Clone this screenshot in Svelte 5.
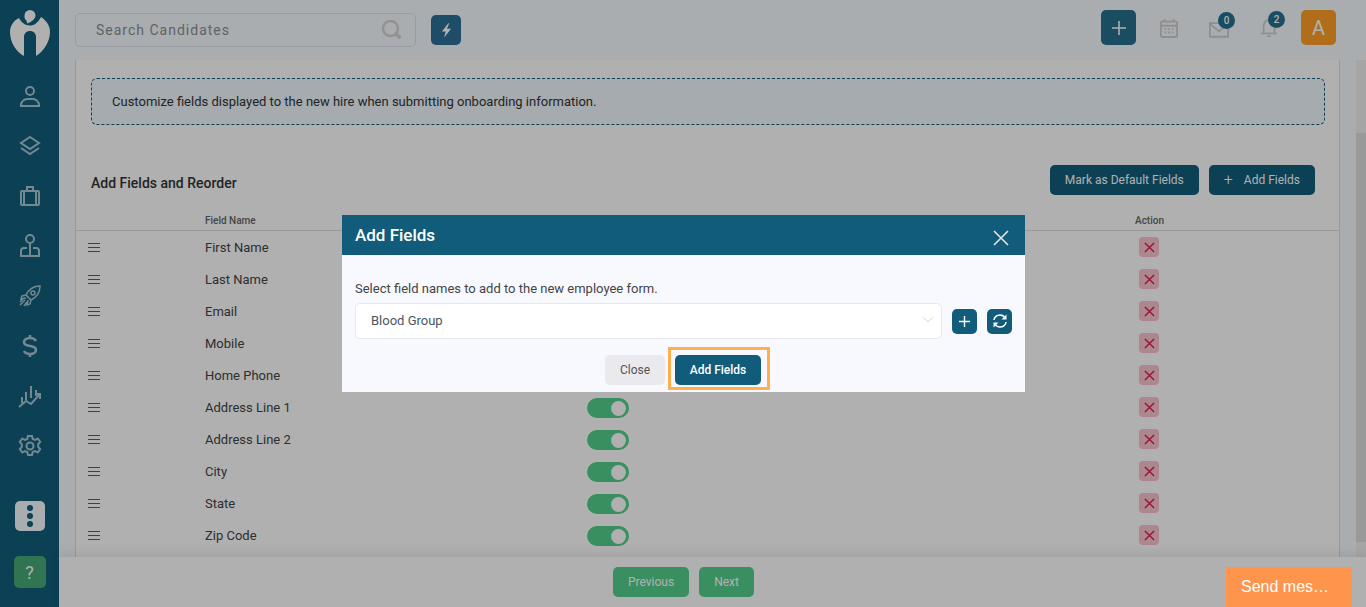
<script>
	const navIcons = [
		"M12 3a4 4 0 1 1 0 8 4 4 0 0 1 0-8zM3 22v-1c0-3 3-6 6-6h6c3 0 6 3 6 6v1z",
		"M12 3l9 6-9 6-9-6zM3 14l9 6 9-6",
		"M4 7h16a1 1 0 0 1 1 1v12a1 1 0 0 1-1 1H4a1 1 0 0 1-1-1V8a1 1 0 0 1 1-1zM9 7V3h6v4M6 7v14M18 7v14",
		"M12 1a4 4 0 1 1 0 8 4 4 0 0 1 0-8zM12 9v13M9 14H6c-2 0-3 1-3 3v5h18v-5c0-2-1-3-3-3h-3",
		"M22 2c-7 0-11 3-14 9l5 5c6-3 9-7 9-14zM15 7a2 2 0 1 1 0 4 2 2 0 0 1 0-4zM8 11l-4 1-1 3 5-1M13 16l-1 4-3 1 1-5M7 16l-5 5M9 18l-3 4M5 15l-3 3"
	];
	const rows = [
		"First Name",
		"Last Name",
		"Email",
		"Mobile",
		"Home Phone",
		"Address Line 1",
		"Address Line 2",
		"City",
		"State",
		"Zip Code"
	];
</script>

<div class="app">
	<aside class="sidebar">
		<svg class="logo" viewBox="0 0 40 46" width="40" height="46">
			<path fill="#fff" d="M20 0a5.500 5.500 0 0 1 5.500 5.500c0 3-2.500 5-5 6.500l-3 1.500c-.8-1-1-2-1-3-2-1-2-3-2-5A5.500 5.500 0 0 1 20 0z" />
			<path fill="#fff" d="M9 8c2 4 6 7.500 11 7.500 4 0 8-2.500 11-8.500 6 4 9 9 9 15 0 10-7 20-14 24V27c0-4-3-6-6-6s-6 2-6 6v19C6 42 0 32 0 22 0 16 3 11 9 8z" />
		</svg>
		<nav class="nav">
			{#each navIcons as d, i}
				<svg class:thin={i === 4} viewBox="0 0 24 24" width="24" height="24"><path {d} /></svg>
			{/each}
			<svg class="dollar" viewBox="0 0 24 24" width="24" height="24"><path d="M18 7c-1-2-3-3-6-3-4 0-6 2-6 4s2 3.500 6 4 6 2 6 4-2 4-6 4c-3 0-5-1-6-3M12 1v3M12 20v3" /></svg>
			<svg viewBox="0 0 24 24" width="24" height="24"><path d="M4 19v-6M8 16V8M13 14V2M18 12V6M1 23l7-6 5 3 9-10M17 10h5v5" /></svg>
			<svg viewBox="0 0 24 24" width="24" height="24"><circle cx="12" cy="12" r="3.500" /><path d="M10 2h4l.7 3 2.300 1 2.700-1.500 2.500 3.500-2 2.200v2.600l2 2.200-2.500 3.500-2.700-1.500-2.300 1-.7 3h-4l-.7-3-2.300-1-2.700 1.500L1.800 15l2-2.200v-2.600L1.800 8l2.500-3.500L7 6l2.300-1z" /></svg>
		</nav>
		<div class="kebab"><i></i><i></i><i></i></div>
		<div class="help">?</div>
	</aside>

	<div class="main">
		<header class="topbar">
			<div class="search">
				<span>Search Candidates</span>
				<svg viewBox="0 0 20 20" width="20" height="20"><circle cx="8.500" cy="8.500" r="7.500" /><path class="thick" d="M14 14l4.500 4" /></svg>
			</div>
			<div class="bolt">
				<svg viewBox="0 0 12 16" width="11" height="15"><path d="M8 0L1 9h4L3.500 15.500 11 6H6.500L9 0z" /></svg>
			</div>
			<div class="tools">
				<div class="plus-big"><svg viewBox="0 0 18 18" width="18" height="18"><path d="M9 2v14M2 9h14" /></svg></div>
				<svg class="tool" viewBox="0 0 20 22" width="18" height="20"><path d="M2 4h16a1 1 0 0 1 1 1v15a1 1 0 0 1-1 1H2a1 1 0 0 1-1-1V5a1 1 0 0 1 1-1zM1 8.500h18M5 1v3M15 1v3M5 12h2M9 12h2M13 12h2M5 16h2M9 16h2M13 16h2" /></svg>
				<div class="tool-badge mail">
					<svg class="tool" viewBox="0 0 22 18" width="20" height="17"><path d="M1 2h20v15H1zM1 3l10 8 6-5" /></svg>
					<b>0</b>
				</div>
				<div class="tool-badge bell">
					<svg class="tool" viewBox="0 0 20 22" width="18" height="20"><path d="M4 17V9c0-4 3-7 6-7s6 3 6 7v8M1 17h18M8 20h4" /></svg>
					<b>2</b>
				</div>
				<div class="avatar">A</div>
			</div>
		</header>

		<div class="body">
			<section class="card">
				<div class="info">Customize fields displayed to the new hire when submitting onboarding information.</div>
				<div class="head">
					<h2>Add Fields and Reorder</h2>
					<div class="head-btns">
						<button class="dark">Mark as Default Fields</button>
						<button class="dark add"><span class="p">+</span>Add Fields</button>
					</div>
				</div>
				<div class="row th">
					<span></span>
					<span>Field Name</span>
					<span></span>
					<span>Action</span>
				</div>
				{#each rows as name}
					<div class="row">
						<span class="drag"><i></i><i></i><i></i></span>
						<span>{name}</span>
						<span class="toggle"></span>
						<span class="del">
							<svg viewBox="0 0 12 12" width="11" height="11"><path d="M1 1l10 10M11 1L1 11" /></svg>
						</span>
					</div>
				{/each}
			</section>
			<div class="scrollbar"><div class="thumb"></div></div>
		</div>

		<footer class="footer">
			<button class="green">Previous</button>
			<button class="green">Next</button>
		</footer>
	</div>

	<div class="overlay"></div>

	<div class="modal">
		<div class="modal-head">
			<h3>Add Fields</h3>
			<svg viewBox="0 0 16 16" width="16" height="16"><path d="M1 1l14 14M15 1L1 15" /></svg>
		</div>
		<div class="modal-body">
			<p>Select field names to add to the new employee form.</p>
			<div class="picker">
				<div class="select">
					<span>Blood Group</span>
					<svg viewBox="0 0 10 6" width="10" height="6"><path d="M.5.5L5 5 9.500.5" /></svg>
				</div>
				<div class="square"><svg viewBox="0 0 14 14" width="13" height="13"><path d="M7 1v12M1 7h12" /></svg></div>
				<div class="square">
					<svg viewBox="0 0 16 16" width="16" height="16"><path d="M2 7c0-3 3-5 6-5 2 0 4 1 5 3M14 9c0 3-3 5-6 5-2 0-4-1-5-3" /><path class="solid" d="M14.500 1.500V6.500H9.500zM1.500 14.500V9.500H6.500z" /></svg>
				</div>
			</div>
			<div class="actions">
				<button class="close">Close</button>
				<div class="highlight"><button class="primary">Add Fields</button></div>
			</div>
		</div>
	</div>

	<div class="send">Send mes…</div>
</div>

<style>
	:global(body) {
		font-family: Roboto, sans-serif;
		overflow: hidden;
	}

	.app {
		position: relative;
		display: flex;
		width: 1366px;
		height: 607px;
		overflow: hidden;
		background: #f5fbff;
		color: #333;
	}

	.sidebar {
		width: 59px;
		flex: none;
		display: flex;
		flex-direction: column;
		align-items: center;
		background: #105d7b;
		padding-top: 10px;
		box-sizing: border-box;
	}
	.logo {
		flex: none;
	}
	.nav {
		display: flex;
		flex-direction: column;
		align-items: center;
		gap: 26px;
		margin-top: 28px;
	}
	.nav path,
	.nav circle {
		fill: none;
		stroke: #a8c6d2;
		stroke-width: 2;
	}
	.nav .thin path {
		stroke-width: 1.500;
	}
	.nav .dollar path {
		stroke-width: 2.600;
	}
	.kebab {
		width: 30px;
		height: 30px;
		margin-top: 43px;
		border-radius: 5px;
		background: #f5fbff;
		display: flex;
		flex-direction: column;
		align-items: center;
		justify-content: center;
		gap: 2px;
	}
	.kebab i {
		width: 6px;
		height: 6px;
		border-radius: 50%;
		background: #105d7b;
	}
	.help {
		width: 32px;
		height: 32px;
		margin-top: 25px;
		border-radius: 5px;
		background: #48a976;
		color: #fff;
		font-size: 18px;
		display: flex;
		align-items: center;
		justify-content: center;
	}

	.main {
		flex: 1;
		min-width: 0;
		display: flex;
		flex-direction: column;
	}

	.topbar {
		height: 60px;
		flex: none;
		display: flex;
		align-items: center;
		padding: 0 30px 0 16px;
		box-sizing: border-box;
	}
	.search {
		width: 341px;
		height: 34px;
		box-sizing: border-box;
		border: 1px solid #dde3e8;
		border-radius: 5px;
		padding: 0 13px 0 20px;
		display: flex;
		align-items: center;
		justify-content: space-between;
		color: #8a9094;
		font-size: 14px;
		letter-spacing: 1px;
	}
	.search svg {
		fill: none;
		stroke: #d4d4d4;
		stroke-width: 2.500;
	}
	.search .thick {
		stroke-width: 3.500;
	}
	.bolt {
		width: 30px;
		height: 30px;
		margin-left: 15px;
		border-radius: 5px;
		background: #2b7095;
		display: flex;
		align-items: center;
		justify-content: center;
	}
	.bolt path {
		fill: #fff;
	}
	.tools {
		margin-left: auto;
		margin-bottom: 5px;
		display: flex;
		align-items: center;
	}
	.plus-big {
		width: 35px;
		height: 35px;
		border-radius: 5px;
		background: #26708f;
		display: flex;
		align-items: center;
		justify-content: center;
	}
	.plus-big path {
		fill: none;
		stroke: #fff;
		stroke-width: 1.600;
	}
	.tool {
		fill: none;
		stroke: #cfcfcf;
		stroke-width: 2;
	}
	.plus-big + .tool {
		margin-left: 24px;
	}
	.tool-badge {
		position: relative;
		display: flex;
		margin-top: 3px;
	}
	.mail {
		margin-left: 31px;
	}
	.bell {
		margin-left: 31px;
		margin-top: 1px;
	}
	.tool-badge b {
		position: absolute;
		top: -9px;
		right: -6px;
		width: 17px;
		height: 17px;
		border-radius: 50%;
		background: #26708f;
		color: #fff;
		font-size: 10px;
		font-weight: 500;
		display: flex;
		align-items: center;
		justify-content: center;
	}
	.bell b {
		top: -7px;
		right: -7px;
	}
	.avatar {
		width: 35px;
		height: 35px;
		margin-left: 23px;
		border-radius: 5px;
		background: #ff9f26;
		color: #fff;
		font-size: 20px;
		display: flex;
		align-items: center;
		justify-content: center;
	}

	.body {
		flex: 1;
		min-height: 0;
		display: flex;
		overflow: hidden;
	}
	.card {
		width: 1265px;
		margin-left: 16px;
		flex: none;
		box-sizing: border-box;
		background: #fff;
		border-left: 1px solid #dcdcdc;
		border-right: 1px solid #dcdcdc;
		padding: 18px 0 0;
		overflow: hidden;
	}
	.info {
		height: 47px;
		box-sizing: border-box;
		margin: 0 14px 0 15px;
		border: 1px dashed #105d7b;
		border-radius: 6px;
		background: #eff8fc;
		padding-left: 20px;
		display: flex;
		align-items: center;
		font-size: 13px;
		color: #333;
	}
	.head {
		display: flex;
		align-items: center;
		justify-content: space-between;
		height: 30px;
		margin-top: 40px;
		padding: 0 24px 0 15px;
	}
	h2 {
		margin: 5px 0 0;
		font-size: 14px;
		font-weight: 500;
		color: #333;
	}
	.head-btns {
		display: flex;
		gap: 10px;
	}
	button {
		font-family: inherit;
		border: 0;
		border-radius: 5px;
		font-size: 12px;
		padding: 0;
	}
	.dark {
		height: 30px;
		background: #105d7b;
		color: #fff;
		padding: 0 15px;
	}
	.add .p {
		font-size: 16px;
		font-weight: 300;
		margin-right: 11px;
		line-height: 1;
		vertical-align: -1px;
	}

	.row {
		display: grid;
		grid-template-columns: 129px 382px 1fr 204px;
		align-items: center;
		height: 32px;
		font-size: 13px;
		color: #444;
	}
	.th {
		height: 23px;
		margin-top: 13px;
		padding-top: 2px;
		border-bottom: 1px solid #dcdcdc;
		box-sizing: border-box;
		font-size: 10px;
		font-weight: 500;
		color: #666;
	}
	.drag {
		display: flex;
		flex-direction: column;
		gap: 3px;
		margin-left: 12px;
		width: 12px;
	}
	.drag i {
		height: 1px;
		background: #516175;
	}
	.toggle {
		position: relative;
		display: block;
		width: 42px;
		height: 20px;
		margin-top: 2px;
		border-radius: 10px;
		background: #54cf8b;
	}
	.toggle::after {
		content: "";
		position: absolute;
		top: 2.500px;
		right: 3px;
		width: 15px;
		height: 15px;
		border-radius: 50%;
		background: #fff;
	}
	.del {
		display: flex;
		align-items: center;
		justify-content: center;
		width: 20px;
		height: 20px;
		margin-left: 4px;
		border-radius: 4px;
		background: #fcc2d0;
	}
	.del path {
		fill: none;
		stroke: #d2214f;
		stroke-width: 1.500;
	}

	.footer {
		height: 50px;
		flex: none;
		box-sizing: border-box;
		background: #fff;
		box-shadow: 0 -4px 10px rgba(0, 0, 0, 0.08);
		position: relative;
		display: flex;
		justify-content: center;
		gap: 10px;
		padding: 10px 58px 0 0;
	}
	.green {
		height: 30px;
		background: #54cf8b;
		color: #fff;
		padding: 0 15px;
		align-self: flex-start;
	}

	.scrollbar {
		width: 10px;
		margin-left: auto;
		background: #f0f0f0;
	}
	.thumb {
		margin-top: 73px;
		height: 409px;
		background: #dedede;
	}

	.overlay {
		position: absolute;
		inset: 0;
		background: rgba(0, 0, 0, 0.31);
	}

	.modal {
		position: absolute;
		left: 342px;
		top: 215px;
		width: 683px;
		height: 177px;
		background: #f8f9fe;
	}
	.modal-head {
		height: 40px;
		background: #115c7a;
		color: #fff;
		display: flex;
		align-items: center;
		justify-content: space-between;
		padding: 0 16px 0 13px;
	}
	h3 {
		margin: 0;
		font-size: 17px;
		font-weight: 500;
	}
	.modal-head svg {
		margin-top: 6px;
	}
	.modal-head path {
		fill: none;
		stroke: #e4e4e4;
		stroke-width: 1.600;
	}
	.modal-body {
		padding: 26px 13px 0;
	}
	.modal-body p {
		margin: 0;
		font-size: 13px;
		line-height: 16px;
		color: #444;
	}
	.picker {
		display: flex;
		align-items: center;
		margin-top: 6px;
	}
	.select {
		width: 587px;
		height: 36px;
		box-sizing: border-box;
		background: #fff;
		border: 1px solid #e8e8ee;
		border-radius: 5px;
		padding: 0 8px 2px 15px;
		display: flex;
		align-items: center;
		justify-content: space-between;
		font-size: 13px;
		color: #4b5563;
	}
	.select path {
		fill: none;
		stroke: #d5d5de;
	}
	.square {
		width: 25px;
		height: 25px;
		margin-left: 10px;
		border-radius: 5px;
		background: #115c7a;
		display: flex;
		align-items: center;
		justify-content: center;
	}
	.square path {
		fill: none;
		stroke: #fff;
		stroke-width: 1.500;
	}
	.square .solid {
		fill: #fff;
		stroke: none;
	}
	.actions {
		display: flex;
		justify-content: center;
		align-items: center;
		gap: 3px;
		margin-top: 8px;
		padding-left: 8px;
	}
	.close {
		width: 60px;
		height: 30px;
		margin-top: 3px;
		background: #e9e9ee;
		color: #555;
	}
	.highlight {
		padding: 5px 6px 2px 4px;
		border: 3px solid #ffb04c;
		display: flex;
	}
	.primary {
		width: 86px;
		height: 30px;
		background: #115c7a;
		color: #fff;
		font-weight: 500;
	}

	.send {
		position: absolute;
		right: 14px;
		bottom: 0;
		width: 126px;
		height: 40px;
		box-sizing: border-box;
		padding-left: 15px;
		background: #ff944d;
		color: #fff;
		font-family: "Liberation Sans", sans-serif;
		font-size: 16px;
		display: flex;
		align-items: center;
	}
</style>
